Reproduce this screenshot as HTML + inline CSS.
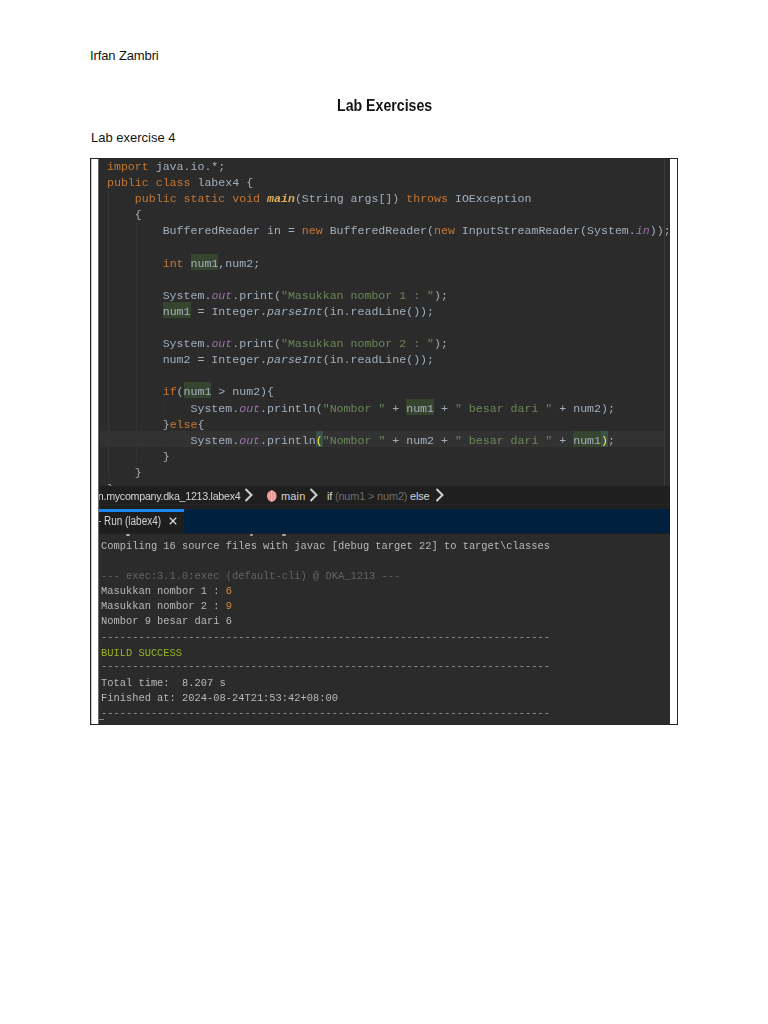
<!DOCTYPE html>
<html><head><meta charset="utf-8">
<style>
html,body{margin:0;padding:0;background:#fff;width:768px;height:1024px;overflow:hidden;position:relative;}
.t{position:absolute;font-family:"Liberation Sans",sans-serif;color:#141414;white-space:pre;line-height:1;}
#box{position:absolute;left:90px;top:158px;width:586px;height:565px;border:1px solid #262626;background:#fff;overflow:hidden;box-shadow:inset 1px 0 0 #c4c4c4;}
#code{position:absolute;left:8px;top:0;width:571px;height:327px;background:#2b2b2b;overflow:hidden;}
.ln{filter:blur(0.3px);position:absolute;left:8px;font-family:"Liberation Mono",monospace;font-size:11.6px;color:#a3afbc;white-space:pre;line-height:16px;height:16px;}
.k{color:#c57733}
.s{color:#6a8759}
.f{color:#9876aa;font-style:italic}
.m{color:#dcae5c;font-weight:bold;font-style:italic}
.i{font-style:italic}
.hl{background:#36452f;padding-top:3px}
.bm{background:#3b514d;color:#ffef28;padding-top:3px}
#cur{position:absolute;left:0;top:272px;width:565px;height:16px;background:#323232;}
#dark{position:absolute;left:8px;top:0;width:571px;height:565px;background:#2b2b2b;overflow:hidden;}
#sb{position:absolute;left:573px;top:0;width:1px;height:327px;z-index:2;background:#3a3a3a;}
#crumb{position:absolute;left:8px;top:327px;width:571px;height:23px;background:#1f1f1f;overflow:hidden;}
#crumbline{position:absolute;left:0;top:18px;width:571px;height:1px;background:#262626;}
.cr{position:absolute;top:4px;font-family:"Liberation Sans",sans-serif;font-size:11px;color:#d4d4d4;white-space:pre;line-height:13px;letter-spacing:-0.3px;}
#tabbar{position:absolute;left:8px;top:350px;width:571px;height:24px;background:#002040;}
#tab{position:absolute;left:0;top:0;width:85px;height:24px;background:#1e1e1e;}
#tabblue{position:absolute;left:0;top:0;width:85px;height:3px;background:#1a86f0;}
#out{position:absolute;left:8px;top:375px;width:565px;height:190px;background:#2b2b2b;overflow:hidden;}
.ol{filter:blur(0.3px);position:absolute;left:2px;font-family:"Liberation Mono",monospace;font-size:10.4px;color:#b8b8b8;white-space:pre;line-height:15px;height:15px;}
</style></head><body>
<div class="t" style="left:90px;top:49px;font-size:13px;letter-spacing:-0.12px;">Irfan Zambri</div>
<div class="t" style="left:337px;top:98px;font-size:16px;font-weight:bold;transform:scaleX(0.885);transform-origin:0 0;">Lab Exercises</div>
<div class="t" style="left:91px;top:131px;font-size:13px;">Lab exercise 4</div>

<div id="box">
  <div id="dark"></div><div id="sb"></div><div style="position:absolute;left:7px;top:0;width:1px;height:565px;background:#6a6a6a;z-index:3"></div><div style="position:absolute;left:8px;top:0;width:1px;height:327px;background:#242424;z-index:3"></div>
  <div id="code">
<div id="cur"></div>
<div style="position:absolute;left:9px;top:32px;width:1px;height:288px;background:#343434"></div>
<div style="position:absolute;left:37px;top:64px;width:1px;height:240px;background:#333333"></div>
<div style="position:absolute;left:65px;top:242px;width:1px;height:48px;background:#313131"></div>
<div class="ln" style="top:0.0px"><span class="k">import</span> java.io.*;</div>
<div class="ln" style="top:16.1px"><span class="k">public class</span> labex4 {</div>
<div class="ln" style="top:32.2px">    <span class="k">public static void</span> <span class="m">main</span>(String args[]) <span class="k">throws</span> IOException</div>
<div class="ln" style="top:48.3px">    {</div>
<div class="ln" style="top:64.4px">        BufferedReader in = <span class="k">new</span> BufferedReader(<span class="k">new</span> InputStreamReader(System.<span class="f">in</span>));</div>
<div class="ln" style="top:96.6px">        <span class="k">int</span> <span class="hl">num1</span>,num2;</div>
<div class="ln" style="top:128.8px">        System.<span class="f">out</span>.print(<span class="s">"Masukkan nombor 1 : "</span>);</div>
<div class="ln" style="top:144.9px">        <span class="hl">num1</span> = Integer.<span class="i">parseInt</span>(in.readLine());</div>
<div class="ln" style="top:177.1px">        System.<span class="f">out</span>.print(<span class="s">"Masukkan nombor 2 : "</span>);</div>
<div class="ln" style="top:193.2px">        num2 = Integer.<span class="i">parseInt</span>(in.readLine());</div>
<div class="ln" style="top:225.4px">        <span class="k">if</span>(<span class="hl">num1</span> &gt; num2){</div>
<div class="ln" style="top:241.5px">            System.<span class="f">out</span>.println(<span class="s">"Nombor "</span> + <span class="hl">num1</span> + <span class="s">" besar dari "</span> + num2);</div>
<div class="ln" style="top:257.6px">        }<span class="k">else</span>{</div>
<div class="ln" style="top:273.7px">            System.<span class="f">out</span>.println<span class="bm">(</span><span class="s">"Nombor "</span> + num2 + <span class="s">" besar dari "</span> + <span class="hl">num1</span><span class="bm">)</span>;</div>
<div class="ln" style="top:289.8px">        }</div>
<div class="ln" style="top:305.9px">    }</div>
<div class="ln" style="top:322.0px">}</div>
  </div>
  <div id="crumb"><div id="crumbline"></div>
<div class="cr" id="c1" style="left:-5px;transform:scaleX(0.974);transform-origin:100% 0;">n.mycompany.dka_1213.labex4</div>
<svg style="position:absolute;left:145px;top:2px" width="10" height="14" viewBox="0 0 10 14"><path d="M1.5 1 L7.5 7 L1.5 13" fill="none" stroke="#d0d0d0" stroke-width="2"/></svg>
<svg style="position:absolute;left:167px;top:3px" width="12" height="14" viewBox="0 0 12 14"><ellipse cx="5.8" cy="7" rx="4.8" ry="5.6" fill="#f3a0a0"/><rect x="4.6" y="1.4" width="2.4" height="11.2" fill="#c86a6a"/><rect x="5.3" y="1.6" width="1.1" height="10.8" fill="#ffe8e8"/></svg>
<div class="cr" id="c2" style="left:182px;letter-spacing:0.15px">main</div>
<svg style="position:absolute;left:210px;top:2px" width="10" height="14" viewBox="0 0 10 14"><path d="M1.5 1 L7.5 7 L1.5 13" fill="none" stroke="#d0d0d0" stroke-width="2"/></svg>
<div class="cr" id="c3" style="left:228px;letter-spacing:-0.2px">if <span style="color:#6e6e6e">(num1 &gt; num2)</span> else</div>
<svg style="position:absolute;left:336px;top:2px" width="10" height="14" viewBox="0 0 10 14"><path d="M1.5 1 L7.5 7 L1.5 13" fill="none" stroke="#d0d0d0" stroke-width="2"/></svg>
</div>
  <div id="tabbar"><div id="tab"><div id="tabblue"></div>
<div class="cr" id="tabt" style="left:5px;top:6px;font-size:12px;letter-spacing:0;transform:scaleX(0.83);transform-origin:0 0;">Run (labex4)</div>
<svg style="position:absolute;left:70px;top:8px" width="8" height="8" viewBox="0 0 8 8"><path d="M0.8 0.8 L7.2 7.2 M7.2 0.8 L0.8 7.2" stroke="#d8d8d8" stroke-width="1.3"/></svg>
<div style="position:absolute;left:0;top:12px;width:2px;height:1px;background:#aaa"></div>
</div></div>
  <div style="position:absolute;left:8px;top:374px;width:571px;height:1px;background:#1f1f1f"></div>
<div id="out">
<div style="position:absolute;left:27px;top:0;width:4px;height:2px;background:#a8a8a8;border-radius:1px"></div>
<div style="position:absolute;left:151px;top:0;width:3px;height:2px;background:#a8a8a8;border-radius:1px"></div>
<div style="position:absolute;left:183px;top:0;width:4px;height:2px;background:#a8a8a8;border-radius:1px"></div>
<div class="ol" style="top:5.0px">Compiling 16 source files with javac [debug target 22] to target\classes</div>
<div class="ol" style="top:35.2px"><span style="color:#646464">--- exec:3.1.0:exec (default-cli) @ DKA_1213 ---</span></div>
<div class="ol" style="top:50.4px">Masukkan nombor 1 : <span style="color:#d88a3a">6</span></div>
<div class="ol" style="top:64.7px">Masukkan nombor 2 : <span style="color:#d88a3a">9</span></div>
<div class="ol" style="top:80.1px">Nombor 9 besar dari 6</div>
<div class="ol" style="top:95.7px"><span style="color:#969696">------------------------------------------------------------------------</span></div>
<div class="ol" style="top:111.5px"><span style="color:#98b526">BUILD SUCCESS</span></div>
<div class="ol" style="top:125.4px"><span style="color:#969696">------------------------------------------------------------------------</span></div>
<div class="ol" style="top:141.6px">Total time:  8.207 s</div>
<div class="ol" style="top:157.2px">Finished at: 2024-08-24T21:53:42+08:00</div>
<div class="ol" style="top:171.6px"><span style="color:#969696">------------------------------------------------------------------------</span></div>
<div style="position:absolute;left:0;top:185px;width:5px;height:1px;background:#808080"></div>
</div>
</div>
</body></html>
